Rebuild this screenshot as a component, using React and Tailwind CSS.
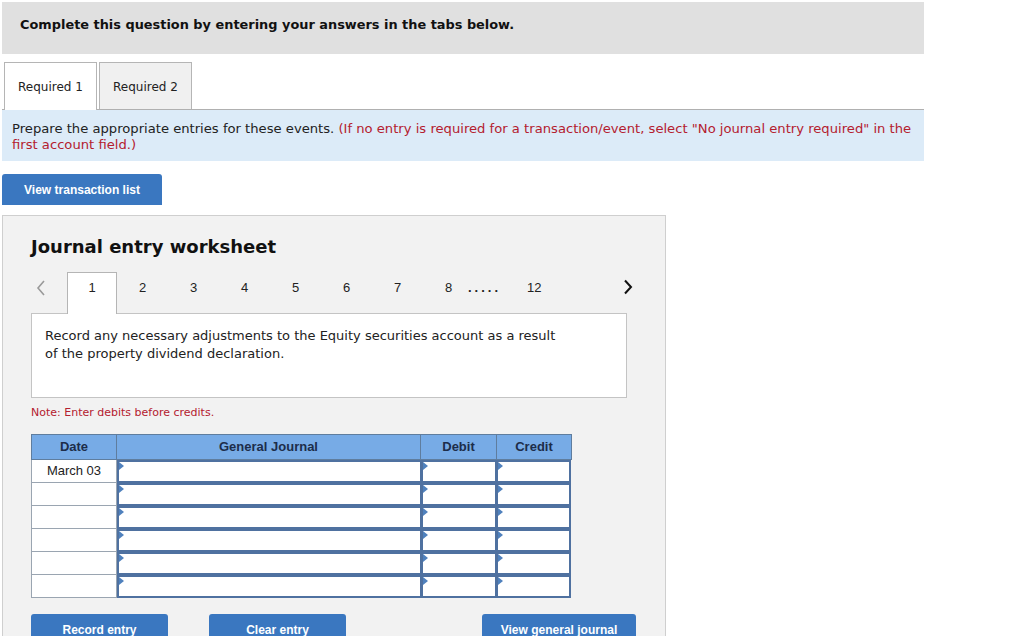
import React from 'react';

const verdana = { fontFamily: '"DejaVu Sans", Verdana, sans-serif' };
const arial = { fontFamily: '"Liberation Sans", Arial, sans-serif' };

const Marker = () => (
  <span className="absolute left-0 top-0 w-0 h-0 border-t-[4px] border-b-[4px] border-l-[5px] border-t-transparent border-b-transparent border-l-[#4f81bd]" />
);

const JournalRow = ({ date }) => (
  <div className="flex h-[23px]">
    <div className="w-[86px] h-[23px] bg-white border border-[#9aa5b1] border-t-0 flex items-center justify-center text-[13px] text-[#222]" style={arial}>
      {date}
    </div>
    <div className="w-[305px] h-[23px] bg-white border-2 border-[#4f71a0] relative">
      <Marker />
    </div>
    <div className="w-[76px] h-[23px] bg-white border-2 border-[#4f71a0] relative -ml-[1px]">
      <Marker />
    </div>
    <div className="w-[75px] h-[23px] bg-white border-2 border-[#4f71a0] relative -ml-[1px]">
      <Marker />
    </div>
  </div>
);

const App = () => {
  const pages = ['2', '3', '4', '5', '6', '7', '8'];
  const rows = ['March 03', '', '', '', '', ''];

  return (
    <div className="w-[1024px] h-[639px] overflow-hidden bg-white relative" style={verdana}>
      <div className="ml-[2px] mt-[2px] w-[922px] h-[52px] bg-[#e0e0e0] flex items-center pl-[18px]">
        <span className="text-[12.9px] font-bold text-[#111] -mt-[6px]">Complete this question by entering your answers in the tabs below.</span>
      </div>

      <div className="ml-[2px] mt-[8px] w-[922px] flex border-b border-[#b0b0b0] h-[48px] items-end">
        <div className="ml-[2px] w-[93px] h-[48px] bg-white border border-[#b5b5b5] border-b-0 flex items-center justify-center text-[12px] text-[#222] relative top-[1px]">
          Required 1
        </div>
        <div className="ml-[2px] w-[93px] h-[47px] bg-[#f0f0f0] border border-[#b5b5b5] border-b-0 flex items-center justify-center pt-[2px] text-[12px] text-[#222]">
          Required 2
        </div>
      </div>

      <div className="ml-[2px] w-[922px] h-[51px] bg-[#dcebf8] px-[10px] pt-[11px] text-[13.15px] leading-[16px] text-[#222]">
        <p>
          Prepare the appropriate entries for these events.{' '}
          <span className="text-[#b4202f]">(If no entry is required for a transaction/event, select "No journal entry required" in the first account field.)</span>
        </p>
      </div>

      <button className="ml-[2px] mt-[13px] w-[160px] h-[31px] bg-[#3a77c0] rounded-t-[3px] text-white text-[12px] font-bold" style={arial}>
        View transaction list
      </button>

      <div className="ml-[2px] mt-[10px] w-[664px] h-[440px] bg-[#f2f2f2] border border-[#cfcfcf] pl-[28px] pt-[18px]">
        <h2 className="text-[18px] font-bold text-[#111] leading-[26px]">Journal entry worksheet</h2>

        <div className="mt-[12px] flex items-end h-[41px] w-[596px] relative">
          <svg className="absolute left-[5px] top-[8px]" width="10" height="16" viewBox="0 0 10 16">
            <path d="M8 1 L2 8 L8 15" fill="none" stroke="#9a9a9a" strokeWidth="1.6" />
          </svg>
          <div className="ml-[36px] w-[50px] h-[42px] bg-white border border-[#b5b5b5] border-b-0 flex justify-center pt-[5px] text-[13px] text-[#222] relative top-[1px] z-10" style={arial}>
            1
          </div>
          <div className="flex items-start pt-[6px] h-[41px] text-[13px] text-[#222]" style={arial}>
            {pages.map((p) => (
              <span key={p} className="w-[51px] text-center">{p}</span>
            ))}
            <span className="ml-[-6px] w-[42px] tracking-[3px] font-bold">.....</span>
            <span className="ml-[17px]">12</span>
          </div>
          <svg className="absolute left-[592px] top-[7px]" width="10" height="16" viewBox="0 0 10 16">
            <path d="M2 1.5 L8 8 L2 14.5" fill="none" stroke="#111" strokeWidth="2" />
          </svg>
        </div>

        <div className="w-[596px] h-[85px] bg-white border border-[#c4c4c4] px-[13px] pt-[13px] text-[13px] leading-[18px] text-[#222]">
          Record any necessary adjustments to the Equity securities account as a result<br />
          of the property dividend declaration.
        </div>

        <div className="mt-[7px] text-[11px] text-[#b4202f]">Note: Enter debits before credits.</div>

        <div className="mt-[12px] w-[541px]" style={arial}>
          <div className="flex h-[26px] bg-[#77abe6] border border-[#5f7d9e] text-[13px] font-bold text-[#1d2d4a]">
            <div className="w-[85px] flex items-center justify-center border-r border-[#5f7d9e]">Date</div>
            <div className="w-[304px] flex items-center justify-center border-r border-[#5f7d9e]">General Journal</div>
            <div className="w-[76px] flex items-center justify-center border-r border-[#5f7d9e]">Debit</div>
            <div className="flex-1 flex items-center justify-center">Credit</div>
          </div>
          {rows.map((d, i) => (
            <JournalRow key={i} date={d} />
          ))}
        </div>

        <div className="mt-[16px] flex w-[605px] text-white text-[12px] font-bold" style={arial}>
          <button className="w-[137px] h-[30px] bg-[#3a77c0] rounded-t-[3px] flex justify-center pt-[7px]">Record entry</button>
          <button className="ml-[41px] w-[137px] h-[30px] bg-[#3a77c0] rounded-t-[3px] flex justify-center pt-[7px]">Clear entry</button>
          <button className="ml-auto w-[154px] h-[30px] bg-[#3a77c0] rounded-t-[3px] flex justify-center pt-[7px]">View general journal</button>
        </div>
      </div>
      <div className="absolute left-0 right-0 top-[636px] h-[3px] bg-white" />
    </div>
  );
};

export default App;
